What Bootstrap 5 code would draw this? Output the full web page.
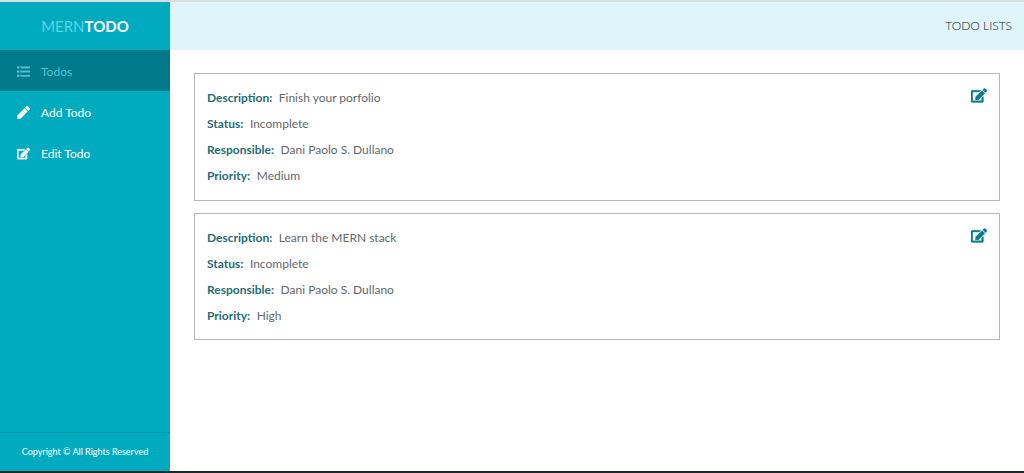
<!DOCTYPE html>
<html lang="en">
<head>
<meta charset="utf-8">
<title>MERN Todo</title>
<link rel="stylesheet" href="https://cdn.jsdelivr.net/npm/bootstrap@5.3.0/dist/css/bootstrap.min.css">
<style>
html,body{height:473px;overflow:hidden}
body{font-family:"Lato","Noto Sans",sans-serif;font-size:12px;color:#5f696d;background:#fff;border-top:2px solid #d8dcdc;border-bottom:2px solid #1c2a2e}
.app-shell{height:469px}
.side-panel{width:170px;background:#00abc0;color:#fff}
.brand-box{height:48px;font-size:15px;font-weight:700}
.brand-box span{color:#5bd4e6;font-weight:400}
.side-link{height:41px;padding:2px 0 0 17px;color:#fff;text-decoration:none;font-size:12px;gap:11px}
.side-link:hover{color:#fff}
.side-link.is-current{background:#007a8a;color:#4fc5d8}
.side-link svg{width:13px;height:13px;flex:none;fill:currentColor;stroke:currentColor;margin-top:-1px}
.side-foot{height:39px;border-top:1px solid #0098ac;font-size:9px}
.top-strip{height:47.5px;background:#def6fa;color:#15191a;font-size:12px;font-weight:300;padding-right:12px}
.todo-area{padding:23.5px 24px 0}
.todo-box{border:1px solid #b4b8b8;border-radius:0;height:127.5px;padding:11.4px 12px 12px;margin-bottom:12px}
.todo-line{height:26px;margin:0}
.todo-line b{color:#1f6c78;font-weight:700;margin-right:6.5px}
.edit-mark{top:14px;right:12px;width:16px;height:15px;fill:#0e7c88;stroke:#0e7c88;stroke-width:14}
</style>
</head>
<body>
<div class="d-flex app-shell">
  <aside class="side-panel d-flex flex-column">
    <div class="brand-box d-flex align-items-center justify-content-center"><span>MERN</span>TODO</div>
    <a href="#" class="side-link is-current d-flex align-items-center">
      <svg viewBox="0 0 14 14" stroke-width=".3"><rect x="0" y="1.5" width="2.4" height="2.2"/><rect x="4" y="1.8" width="10" height="1.6"/><rect x="0" y="6" width="2.4" height="2.2"/><rect x="4" y="6.3" width="10" height="1.6"/><rect x="0" y="10.5" width="2.4" height="2.2"/><rect x="4" y="10.8" width="10" height="1.6"/></svg>
      Todos</a>
    <a href="#" class="side-link d-flex align-items-center">
      <svg viewBox="0 0 512 512" stroke-width="0"><path d="M497.9 142.1l-46.1 46.1c-4.7 4.7-12.3 4.7-17 0l-111-111c-4.7-4.7-4.7-12.3 0-17l46.1-46.1c18.7-18.7 49.1-18.7 67.9 0l60.1 60.1c18.8 18.7 18.8 49.1 0 67.9zM284.2 99.8L21.6 362.4.4 483.9c-2.9 16.4 11.4 30.6 27.8 27.8l121.5-21.3 262.6-262.6c4.7-4.7 4.7-12.3 0-17l-111-111c-4.8-4.7-12.4-4.7-17.1 0z"/></svg>
      Add Todo</a>
    <a href="#" class="side-link d-flex align-items-center">
      <svg viewBox="0 0 576 512" stroke-width="14"><path d="M402.6 83.2l90.2 90.2c3.8 3.8 3.8 10 0 13.8L274.4 405.6l-92.8 10.3c-12.4 1.4-22.9-9.1-21.5-21.5l10.3-92.8L388.8 83.2c3.8-3.8 10-3.8 13.8 0zm162-22.9l-48.8-48.8c-15.2-15.2-39.9-15.2-55.2 0l-35.4 35.4c-3.8 3.8-3.8 10 0 13.8l90.2 90.2c3.8 3.8 10 3.8 13.8 0l35.4-35.4c15.2-15.3 15.2-40 0-55.2zM384 346.2V448H64V128h229.8c3.2 0 6.2-1.3 8.5-3.5l40-40c7.6-7.6 2.2-20.5-8.5-20.5H48C21.5 64 0 85.5 0 112v352c0 26.5 21.5 48 48 48h352c26.5 0 48-21.5 48-48V306.2c0-10.7-12.9-16-20.5-8.5l-40 40c-2.2 2.3-3.5 5.3-3.5 8.5z"/></svg>
      Edit Todo</a>
    <div class="side-foot mt-auto d-flex align-items-center justify-content-center">Copyright © All Rights Reserved</div>
  </aside>
  <main class="flex-grow-1">
    <div class="top-strip d-flex align-items-center justify-content-end">TODO LISTS</div>
    <div class="todo-area">
      <div class="todo-box position-relative">
        <p class="todo-line d-flex align-items-center"><b>Description:</b> Finish your porfolio</p>
        <p class="todo-line d-flex align-items-center"><b>Status:</b> Incomplete</p>
        <p class="todo-line d-flex align-items-center"><b>Responsible:</b> Dani Paolo S. Dullano</p>
        <p class="todo-line d-flex align-items-center"><b>Priority:</b> Medium</p>
        <svg class="edit-mark position-absolute" viewBox="0 0 576 512"><path d="M402.6 83.2l90.2 90.2c3.8 3.8 3.8 10 0 13.8L274.4 405.6l-92.8 10.3c-12.4 1.4-22.9-9.1-21.5-21.5l10.3-92.8L388.8 83.2c3.8-3.8 10-3.8 13.8 0zm162-22.9l-48.8-48.8c-15.2-15.2-39.9-15.2-55.2 0l-35.4 35.4c-3.8 3.8-3.8 10 0 13.8l90.2 90.2c3.8 3.8 10 3.8 13.8 0l35.4-35.4c15.2-15.3 15.2-40 0-55.2zM384 346.2V448H64V128h229.8c3.2 0 6.2-1.3 8.5-3.5l40-40c7.6-7.6 2.2-20.5-8.5-20.5H48C21.5 64 0 85.5 0 112v352c0 26.5 21.5 48 48 48h352c26.5 0 48-21.5 48-48V306.2c0-10.7-12.9-16-20.5-8.5l-40 40c-2.2 2.3-3.5 5.3-3.5 8.5z"/></svg>
      </div>
      <div class="todo-box position-relative">
        <p class="todo-line d-flex align-items-center"><b>Description:</b> Learn the MERN stack</p>
        <p class="todo-line d-flex align-items-center"><b>Status:</b> Incomplete</p>
        <p class="todo-line d-flex align-items-center"><b>Responsible:</b> Dani Paolo S. Dullano</p>
        <p class="todo-line d-flex align-items-center"><b>Priority:</b> High</p>
        <svg class="edit-mark position-absolute" viewBox="0 0 576 512"><path d="M402.6 83.2l90.2 90.2c3.8 3.8 3.8 10 0 13.8L274.4 405.6l-92.8 10.3c-12.4 1.4-22.9-9.1-21.5-21.5l10.3-92.8L388.8 83.2c3.8-3.8 10-3.8 13.8 0zm162-22.9l-48.8-48.8c-15.2-15.2-39.9-15.2-55.2 0l-35.4 35.4c-3.8 3.8-3.8 10 0 13.8l90.2 90.2c3.8 3.8 10 3.8 13.8 0l35.4-35.4c15.2-15.3 15.2-40 0-55.2zM384 346.2V448H64V128h229.8c3.2 0 6.2-1.3 8.5-3.5l40-40c7.6-7.6 2.2-20.5-8.5-20.5H48C21.5 64 0 85.5 0 112v352c0 26.5 21.5 48 48 48h352c26.5 0 48-21.5 48-48V306.2c0-10.7-12.9-16-20.5-8.5l-40 40c-2.2 2.3-3.5 5.3-3.5 8.5z"/></svg>
      </div>
    </div>
  </main>
</div>
<script src="https://cdn.jsdelivr.net/npm/bootstrap@5.3.0/dist/js/bootstrap.bundle.min.js"></script>
</body>
</html>
